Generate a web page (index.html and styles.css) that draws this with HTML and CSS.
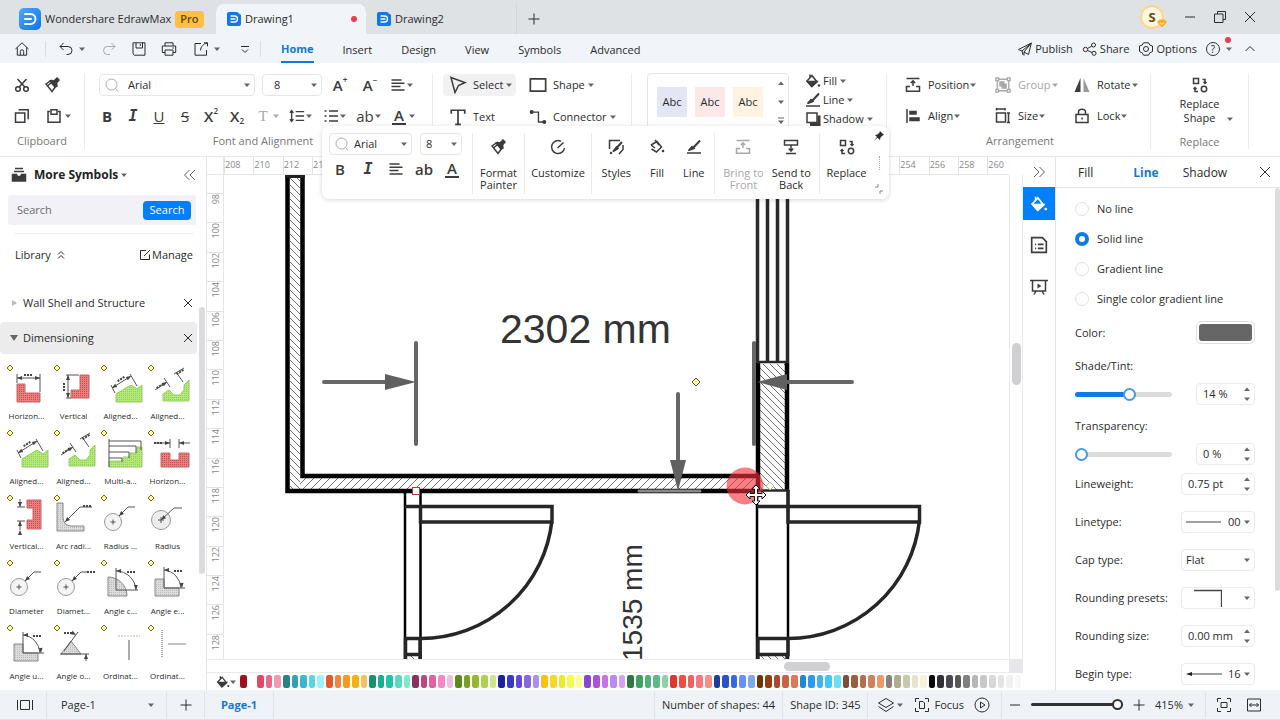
FILE: index.html
```html
<!DOCTYPE html>
<html lang="en">
<head>
<meta charset="utf-8">
<title>Wondershare EdrawMax</title>
<link rel="stylesheet" href="styles.css">
</head>
<body>
<svg class="sprite" aria-hidden="true">
  <defs>
    <linearGradient id="brand" x1="0" y1="0" x2="1" y2="1"><stop offset="0" stop-color="#4aa8fb"/><stop offset="1" stop-color="#1273ea"/></linearGradient>
    <pattern id="hatchDown" width="7" height="7" patternUnits="userSpaceOnUse"><path d="M-1 -1L8 8M-1 6L1 8M6 -1L8 1" stroke="#707070" stroke-width="1"/></pattern>
    <pattern id="hatchUp" width="8" height="8" patternUnits="userSpaceOnUse"><path d="M-1 9L9 -1M-1 1L1 -1M7 9L9 7" stroke="#707070" stroke-width="1"/></pattern>
    <pattern id="redFill" width="2" height="2" patternUnits="userSpaceOnUse"><rect width="2" height="2" fill="#e88080"/><rect width="1" height="1" fill="#c84c4c"/></pattern>
    <pattern id="greenFill" width="2" height="2" patternUnits="userSpaceOnUse"><rect width="2" height="2" fill="#b2ea78"/><rect width="1" height="1" fill="#98cc60"/></pattern>
    <pattern id="grayFill" width="2" height="2" patternUnits="userSpaceOnUse"><rect width="2" height="2" fill="#dcdcdc"/><rect width="1" height="1" fill="#bcbcbc"/></pattern>
  </defs>
  <symbol id="logo" viewBox="0 0 22 22"><rect width="22" height="22" rx="5" fill="url(#brand)"/><path d="M6 6h5.500a5 5 0 0 1 0 10H6M6 11h6" fill="none" stroke="#fff" stroke-width="2" stroke-linecap="round"/></symbol>
  <symbol id="doc" viewBox="0 0 14 14"><path d="M2 0h8l4 3v9a2 2 0 0 1-2 2H2a2 2 0 0 1-2-2V2a2 2 0 0 1 2-2z" fill="#0f7ae5"/><path d="M4 4h3.500a3 3 0 0 1 0 6H4M4 7h4" fill="none" stroke="#fff" stroke-width="1.300" stroke-linecap="round"/></symbol>
  <symbol id="caret" viewBox="0 0 8 8"><path d="M1 2.500h6L4 6z" fill="currentColor"/></symbol>
  <symbol id="up" viewBox="0 0 8 8"><path d="M1 6h6L4 2.500z" fill="currentColor"/></symbol>
  <symbol id="home" viewBox="0 0 16 16"><path d="M1.500 8L8 1.800 14.500 8M3.300 6.500v7.700h9.400V6.500M6.300 14v-3.500a1.700 1.700 0 0 1 3.400 0V14"/></symbol>
  <symbol id="undo" viewBox="0 0 16 16"><path d="M5.500 2L2 5.500 5.500 9M2 5.500h8a4 4 0 0 1 0 8H8.500"/></symbol>
  <symbol id="redo" viewBox="0 0 16 16"><path d="M10.500 2L14 5.500 10.500 9M14 5.500H6.500a4 4 0 0 0 0 8H9"/></symbol>
  <symbol id="save" viewBox="0 0 16 16"><path d="M2 1.800h12v12.400H3.500L2 12.800zM5 2v5h6.500V2M9.300 3v2"/></symbol>
  <symbol id="print" viewBox="0 0 16 16"><path d="M4 5V1.800h8V5M4 11.500H1.300V5h13.400v6.500H12M4 9h8v5.200H4zM11.500 7h1.500"/></symbol>
  <symbol id="export" viewBox="0 0 16 16"><path d="M8 2.500H2v11.700h11.500V9M11 1.800h3.500v3.500M14.300 2C10 3 8 5.500 7.500 9.500"/></symbol>
  <symbol id="qat" viewBox="0 0 16 16"><path d="M4 5.500h8M5 8.500l3 3 3-3"/></symbol>
  <symbol id="plus" viewBox="0 0 16 16"><path d="M8 2.500v11M2.500 8h11"/></symbol>
  <symbol id="minus" viewBox="0 0 16 16"><path d="M3 8h10"/></symbol>
  <symbol id="restore" viewBox="0 0 16 16"><path d="M2.500 5h8.500v8.500H2.500zM5.500 5V2.500h8v8H11"/></symbol>
  <symbol id="close" viewBox="0 0 16 16"><path d="M3 3l10 10M13 3L3 13"/></symbol>
  <symbol id="publish" viewBox="0 0 16 16"><path d="M14.300 2L1.500 8.500 5 10l9.300-8L11.500 13.500 7 11v3.500M7 11l7.300-9M5 10l1 4"/></symbol>
  <symbol id="share" viewBox="0 0 16 16"><circle cx="3.500" cy="8.500" r="2.200"/><circle cx="11.500" cy="4" r="2"/><circle cx="12" cy="12.300" r="2"/><path d="M5.500 7.500l4.300-2.500M5.500 9.500l4.700 2"/></symbol>
  <symbol id="options" viewBox="0 0 16 16"><path d="M5.500 1.800h5l1.300 2.200 2.700 1v5.500l-2.700 1.300-1.300 2.400h-5l-1.300-2.400-2.700-1.300V5L4.200 4z"/><circle cx="8" cy="8" r="2.500"/></symbol>
  <symbol id="chevUp" viewBox="0 0 16 16"><path d="M3.500 10L8 5.500l4.500 4.500"/></symbol>
  <symbol id="cut" viewBox="0 0 16 16"><circle cx="4" cy="12" r="2.300"/><circle cx="12" cy="12" r="2.300"/><path d="M5.200 10L12.500 2M10.800 10L3.500 2"/></symbol>
  <symbol id="brush" viewBox="0 0 16 16"><path d="M2 7l5-3.500 5 5.500-4 5.500zM7 6l-3 2.500" /><path d="M7.500 3.500L10 4l3-3 2 2-2.500 3 .5 3-2 1-5-6z" fill="currentColor"/></symbol>
  <symbol id="copy" viewBox="0 0 16 16"><path d="M1.500 5h9.300v9.300H1.500zM4.500 1.800h9.700v9.400"/></symbol>
  <symbol id="paste" viewBox="0 0 16 16"><path d="M4 3.500H2v10.700h12V3.500h-2M5 1.800h6v4.400H5z"/></symbol>
  <symbol id="find" viewBox="0 0 16 16"><circle cx="7.500" cy="7.500" r="5.500"/><path d="M11.500 11.500l2.500 3"/></symbol>
  <symbol id="align" viewBox="0 0 16 16"><path d="M1.500 3h10M1.500 6.300h13M1.500 9.600h9M1.500 13h13"/></symbol>
  <symbol id="spacing" viewBox="0 0 18 16"><path d="M3 2v12M1 4.500l2-2.500 2 2.500M1 11.500L3 14l2-2.500M7.500 3H17M7.500 8H17M7.500 13H17"/></symbol>
  <symbol id="list" viewBox="0 0 16 16"><path d="M1.500 3h2M1.500 8h2M1.500 13h2M6 3h9M6 8h9M6 13h9"/></symbol>
  <symbol id="pointer" viewBox="0 0 18 18"><path d="M2 1.500L16 6.500l-6.500 3-3.500 7z"/></symbol>
  <symbol id="textTool" viewBox="0 0 16 16"><path d="M2 5V2h12v3M8 2v12.500M5.500 14.500h5"/></symbol>
  <symbol id="shape" viewBox="0 0 16 16"><path d="M1.200 2.500h13.600v11H1.200z"/></symbol>
  <symbol id="connector" viewBox="0 0 20 18"><path d="M4 3.500h6.500v11H16"/><circle cx="3" cy="3.500" r="1.500" fill="currentColor"/><circle cx="17" cy="14.500" r="1.500" fill="currentColor"/></symbol>
  <symbol id="bucket" viewBox="0 0 16 16"><path d="M7 2.500L2 8l4.500 5.500L12 9zM5 5V1.500"/><path d="M2.500 8.500h9.500L7 13.500z" fill="currentColor"/><circle cx="14" cy="12.500" r="1.200" fill="currentColor" stroke="none"/></symbol>
  <symbol id="bucketOpen" viewBox="0 0 16 16"><path d="M2 6l6-3.500 4.500 5.500-5 5L2.500 10M2 6l4 3M6 1l4 5"/><circle cx="14" cy="12" r="1.300" fill="currentColor" stroke="none"/></symbol>
  <symbol id="pen" viewBox="0 0 16 16"><path d="M14 1.500L7 9" stroke-width="2"/><path d="M2.500 11.500L6 7.500l2 2z" fill="currentColor"/><path d="M1 14h14"/></symbol>
  <symbol id="shadow" viewBox="0 0 16 16"><path d="M5 13.500h9V4.500" stroke-width="3"/><path d="M2 2h10v9.500H2z"/></symbol>
  <symbol id="position" viewBox="0 0 16 16"><path d="M1.500 1.500h13M8 9V4M5.800 6L8 3.800 10.200 6M5 9.500H1.500v4.800h13V9.500H11"/></symbol>
  <symbol id="back" viewBox="0 0 16 16"><path d="M1.500 1.500h13v4.500h-13zM8 6v6M5.800 9.500L8 12l2.200-2.500M3 14.500h10"/></symbol>
  <symbol id="alignObj" viewBox="0 0 16 16"><path d="M2 1v14"/><path d="M5 3.500h6v2.500H5zM5 10h9v2.500H5z" fill="currentColor"/></symbol>
  <symbol id="group" viewBox="0 0 18 18"><path d="M2.500 2.500h13v13h-13z"/><path d="M1 1h3v3H1zM14 1h3v3h-3zM1 14h3v3H1zM14 14h3v3h-3z" fill="#fff"/><path d="M5.500 5.500h4.500v4.500H5.500zM8 8h4.500v4.500H8z" fill="currentColor"/></symbol>
  <symbol id="size" viewBox="0 0 16 16"><path d="M1.500 1h8.500M1.500 0v2.500M10 0v2.500M1.500 5h9v9h-9zM13.500 5.500v8.500M12 5h3M12 14.500h3"/></symbol>
  <symbol id="rotate" viewBox="0 0 16 16"><path d="M6.500 1v14H.5z" fill="currentColor" stroke="none"/><path d="M9.500 1v14h6z" fill="#999" stroke="none"/></symbol>
  <symbol id="lock" viewBox="0 0 16 16"><path d="M2 6.500h12v8H2zM4.500 6.500V4a3.500 2.800 0 0 1 7 0v2.500M8 9.500v2"/></symbol>
  <symbol id="replace" viewBox="0 0 16 16"><path d="M1.500 1.500h5v5h-5z"/><circle cx="12" cy="12" r="2.700"/><path d="M10.500 2.500H13V6M11.500 5l1.500 1.500L14.500 5M6 14.500H3V11M1.500 12L3 10.500 4.500 12"/></symbol>
  <symbol id="customize" viewBox="0 0 16 16"><path d="M11 2.300A6.500 6.500 0 1 0 14.500 9M7.500 9L13.500 3.500"/></symbol>
  <symbol id="styles" viewBox="0 0 16 16"><path d="M1.500 10V1.500H12M15 6v4.500L11 15"/><path d="M14 3L9 8.500" stroke-width="2"/><path d="M5 12.500l3.500-4.500 1.500 1.500z" fill="currentColor"/><circle cx="3" cy="14" r=".5"/></symbol>
  <symbol id="pin" viewBox="0 0 12 12"><path d="M7 1l4 4-1.500.5-2 2L7 10 4.500 7.700 1 11l3-4L2 5l2.500-.5 2-2z" fill="currentColor"/></symbol>
  <symbol id="box" viewBox="0 0 16 16"><path d="M4 1.500h8M3 4.500h10" stroke-width="1.500"/><path d="M1.500 7.500h4l1 2h3l1-2h4V14h-13z" fill="currentColor"/></symbol>
  <symbol id="dblLeft" viewBox="0 0 16 16"><path d="M7.500 3L2.500 8l5 5M13 3L8 8l5 5"/></symbol>
  <symbol id="dblRight" viewBox="0 0 16 16"><path d="M3 3l5 5-5 5M8.500 3l5 5-5 5"/></symbol>
  <symbol id="dblUp" viewBox="0 0 10 12"><path d="M2 5.500l3-3 3 3M2 9.500l3-3 3 3"/></symbol>
  <symbol id="edit" viewBox="0 0 12 12"><path d="M7 1.500H1.500v9h9V5.500M5 7l6-6"/></symbol>
  <symbol id="page" viewBox="0 0 16 16"><path d="M1.500 1.500h9.500l3.500 3.500v9.500h-13zM4.500 7.500h1M4.500 11h1M7 7.500h5M7 11h5"/></symbol>
  <symbol id="present" viewBox="0 0 18 16"><path d="M0 1.500h18M2.500 1.500v10.500h13V1.500M6 12l-2 3.500M12 12l2 3.500"/><path d="M7.500 4.500v5L11.500 7z" fill="currentColor" stroke="none"/></symbol>
  <symbol id="panel" viewBox="0 0 18 14"><path d="M1.500 2v10M16.500 2v10M4.500 2.500h9v9h-9z"/></symbol>
  <symbol id="layers" viewBox="0 0 18 16"><path d="M9 1.500l7.500 4.500L9 10.500 1.500 6zM1.500 9.500L9 14.500l7.500-5"/></symbol>
  <symbol id="focus" viewBox="0 0 16 16"><path d="M1.500 5V1.500H5M11 1.500h3.500V5M14.500 11v3.500H11M5 14.500H1.500V11M5.500 4.500h3.500L10.500 6v5.500h-5z"/></symbol>
  <symbol id="play" viewBox="0 0 16 16"><circle cx="8" cy="8" r="7"/><path d="M6.500 5v6l4.500-3z"/></symbol>
  <symbol id="fit" viewBox="0 0 16 16"><path d="M1.500 5V1.500H5M11 1.500h3.500V5M14.500 11v3.500H11M5 14.500H1.500V11M5 5.500h6v5H5z"/></symbol>
  <symbol id="fitWidth" viewBox="0 0 16 16"><path d="M1.500 2h13M1.500 2v12h13V2M3.500 8h9M5.500 6l-2 2 2 2M10.500 6l2 2-2 2"/></symbol>
  <symbol id="handle" viewBox="0 0 8 8"><path d="M4 1l3 3-3 3-3-3z" fill="#ffffa0" stroke="#6b6b20" stroke-width="1"/></symbol>
</svg>

<header class="titlebar">
  <div class="brand"><svg class="i22"><use href="#logo"/></svg><span>Wondershare EdrawMax</span><b class="pro">Pro</b></div>
  <button class="tab active"><svg class="i14"><use href="#doc"/></svg><span>Drawing1</span><i class="dot"></i></button>
  <button class="tab"><svg class="i14"><use href="#doc"/></svg><span>Drawing2</span></button>
  <button class="newtab" aria-label="New tab"><svg class="ic"><use href="#plus"/></svg></button>
  <div class="window">
    <span class="avatar">S<svg viewBox="0 0 10 9"><path d="M2.500.5h5L10 3 5 8.500 0 3z" fill="#f9ad20"/><path d="M3 3.500l2 2 2-2" stroke="#fff" fill="none"/></svg></span>
    <button aria-label="Minimize"><svg class="ic"><use href="#minus"/></svg></button>
    <button aria-label="Restore"><svg class="ic"><use href="#restore"/></svg></button>
    <button aria-label="Close"><svg class="ic"><use href="#close"/></svg></button>
  </div>
</header>

<nav class="menubar">
  <div class="quick">
    <button class="homebtn" aria-label="Start"><svg class="ic"><use href="#home"/></svg></button>
    <button class="wide" aria-label="Undo"><svg class="ic"><use href="#undo"/></svg><svg class="ct"><use href="#caret"/></svg></button>
    <button class="off" aria-label="Redo"><svg class="ic"><use href="#redo"/></svg></button>
    <button aria-label="Save"><svg class="ic"><use href="#save"/></svg></button>
    <button aria-label="Print"><svg class="ic"><use href="#print"/></svg></button>
    <button class="wide" aria-label="Export"><svg class="ic"><use href="#export"/></svg><svg class="ct"><use href="#caret"/></svg></button>
    <button aria-label="Customize toolbar"><svg class="ic"><use href="#qat"/></svg></button>
  </div>
  <div class="menus">
    <a class="current" href="#home">Home</a><a href="#insert">Insert</a><a href="#design">Design</a><a href="#view">View</a><a href="#symbols">Symbols</a><a href="#advanced">Advanced</a>
  </div>
  <div class="actions">
    <button><svg class="ic"><use href="#publish"/></svg>Publish</button>
    <button><svg class="ic"><use href="#share"/></svg>Share</button>
    <button><svg class="ic"><use href="#options"/></svg>Options</button>
    <button class="help" aria-label="Help"><span class="q">?</span><svg class="ct"><use href="#caret"/></svg><i class="dot"></i></button>
    <button aria-label="Collapse ribbon"><svg class="ic"><use href="#chevUp"/></svg></button>
  </div>
</nav>

<section class="ribbon">
  <div class="rgroup clip">
    <div class="row"><button aria-label="Cut"><svg class="ic b"><use href="#cut"/></svg></button><button aria-label="Format painter"><svg class="ic b"><use href="#brush"/></svg></button></div>
    <div class="row"><button aria-label="Copy"><svg class="ic b"><use href="#copy"/></svg></button><button class="paste" aria-label="Paste"><svg class="ic b"><use href="#paste"/></svg><svg class="ct"><use href="#caret"/></svg></button></div>
    <p>Clipboard</p>
  </div>
  <div class="rgroup font">
    <div class="row">
      <label class="combo family"><svg class="ic"><use href="#find"/></svg><select aria-label="Font"><option>Arial</option></select><svg class="ct"><use href="#caret"/></svg></label>
      <label class="combo fsize"><select aria-label="Font size"><option>8</option></select><svg class="ct"><use href="#caret"/></svg></label>
      <button class="glyph grow" aria-label="Grow font">A<sup>+</sup></button>
      <button class="glyph grow" aria-label="Shrink font">A<sup>−</sup></button>
      <button class="drop" aria-label="Text alignment"><svg class="ic b"><use href="#align"/></svg><svg class="ct"><use href="#caret"/></svg></button>
    </div>
    <div class="row chars">
      <button class="glyph bold">B</button><button class="glyph ital">I</button><button class="glyph under">U</button><button class="glyph strike">S</button><button class="glyph">X<sup>2</sup></button><button class="glyph">X<sub>2</sub></button>
      <button class="drop off"><span class="glyph tee">T</span><svg class="ct"><use href="#caret"/></svg></button>
      <button class="drop" aria-label="Line spacing"><svg class="ic b"><use href="#spacing"/></svg><svg class="ct"><use href="#caret"/></svg></button>
      <button class="drop" aria-label="Bullets"><svg class="ic b"><use href="#list"/></svg><svg class="ct"><use href="#caret"/></svg></button>
      <button class="drop"><span class="glyph">ab</span><svg class="ct"><use href="#caret"/></svg></button>
      <button class="drop"><span class="glyph fc">A</span><svg class="ct"><use href="#caret"/></svg></button>
    </div>
    <p>Font and Alignment</p>
  </div>
  <div class="rgroup tools">
    <div class="row"><button class="cmd c1 on"><svg class="ic b i18"><use href="#pointer"/></svg>Select<svg class="ct"><use href="#caret"/></svg></button><button class="cmd"><svg class="ic b i18"><use href="#shape"/></svg>Shape<svg class="ct"><use href="#caret"/></svg></button></div>
    <div class="row"><button class="cmd c1"><svg class="ic b i18"><use href="#textTool"/></svg>Text</button><button class="cmd"><svg class="ic b i18"><use href="#connector"/></svg>Connector<svg class="ct"><use href="#caret"/></svg></button></div>
  </div>
  <div class="rgroup looks">
    <div class="gallery">
      <button class="abc lilac">Abc</button><button class="abc rose">Abc</button><button class="abc cream">Abc</button>
      <div class="arrows"><svg class="ct"><use href="#up"/></svg><svg class="ct"><use href="#caret"/></svg><svg class="ct" viewBox="0 0 8 8"><path d="M1 1h6" stroke="currentColor"/><path d="M1 3.500h6L4 7z" fill="currentColor"/></svg></div>
    </div>
    <div class="stack">
      <button><svg class="ic b"><use href="#bucket"/></svg>Fill<svg class="ct"><use href="#caret"/></svg></button>
      <button><svg class="ic b"><use href="#pen"/></svg>Line<svg class="ct"><use href="#caret"/></svg></button>
      <button><svg class="ic b"><use href="#shadow"/></svg>Shadow<svg class="ct"><use href="#caret"/></svg></button>
    </div>
  </div>
  <div class="rgroup arrange">
    <div class="row"><button class="cmd"><svg class="ic b"><use href="#position"/></svg>Position<svg class="ct"><use href="#caret"/></svg></button><button class="cmd off"><svg class="ic b"><use href="#group"/></svg>Group<svg class="ct"><use href="#caret"/></svg></button><button class="cmd"><svg class="ic b"><use href="#rotate"/></svg>Rotate<svg class="ct"><use href="#caret"/></svg></button></div>
    <div class="row"><button class="cmd"><svg class="ic b"><use href="#alignObj"/></svg>Align<svg class="ct"><use href="#caret"/></svg></button><button class="cmd"><svg class="ic b"><use href="#size"/></svg>Size<svg class="ct"><use href="#caret"/></svg></button><button class="cmd"><svg class="ic b"><use href="#lock"/></svg>Lock<svg class="ct"><use href="#caret"/></svg></button></div>
    <p>Arrangement</p>
  </div>
  <div class="rgroup swap">
    <button><svg class="ic b"><use href="#replace"/></svg><span>Replace<br>Shape</span><svg class="ct"><use href="#caret"/></svg></button>
    <p>Replace</p>
  </div>

  <div class="floatbar">
    <div class="ftext">
      <div class="frow">
        <label class="combo ffamily"><svg class="ic"><use href="#find"/></svg><select aria-label="Font"><option>Arial</option></select><svg class="ct"><use href="#caret"/></svg></label>
        <label class="combo fsmall"><select aria-label="Font size"><option>8</option></select><svg class="ct"><use href="#caret"/></svg></label>
      </div>
      <div class="frow fchars"><button class="glyph bold">B</button><button class="glyph ital">I</button><button aria-label="Align"><svg class="ic b"><use href="#align"/></svg></button><button class="glyph">ab</button><button class="glyph"><span class="fc">A</span></button></div>
    </div>
    <div class="fg w52"><button><svg class="ic b"><use href="#brush"/></svg>Format<br>Painter</button></div>
    <div class="fg w67"><button><svg class="ic b"><use href="#customize"/></svg>Customize</button></div>
    <div class="fg w123"><button><svg class="ic b"><use href="#styles"/></svg>Styles</button><button><svg class="ic b"><use href="#bucketOpen"/></svg>Fill</button><button><svg class="ic b"><use href="#pen"/></svg>Line</button></div>
    <div class="fg w105"><button class="off"><svg class="ic b"><use href="#position"/></svg>Bring to<br>Front</button><button><svg class="ic b"><use href="#back"/></svg>Send to<br>Back</button></div>
    <div class="fg w54"><button><svg class="ic b"><use href="#replace"/></svg>Replace</button></div>
    <div class="fend"><svg class="i12"><use href="#pin"/></svg><span class="dots"></span><svg class="i12" viewBox="0 0 12 12"><path d="M2 4h3V1M7 11V8h3" fill="none" stroke="#888"/></svg></div>
  </div>
</section>

<main>
  <aside class="library">
    <div class="lhead"><svg class="ic b"><use href="#box"/></svg><h2>More Symbols</h2><svg class="ct"><use href="#caret"/></svg><button aria-label="Collapse"><svg class="ic"><use href="#dblLeft"/></svg></button></div>
    <form class="search"><input type="text" placeholder="Search" aria-label="Search symbols"><button type="button">Search</button></form>
    <div class="lrow"><button>Library<svg class="i12 ln"><use href="#dblUp"/></svg></button><button><svg class="i12 ln"><use href="#edit"/></svg>Manage</button></div>
    <div class="cat"><svg viewBox="0 0 8 8"><path d="M2 1v6l5-3z" fill="#bbb"/></svg><span>Wall Shell and Structure</span><button aria-label="Remove"><svg class="i12 ln" viewBox="0 0 12 12"><path d="M2 2l8 8M10 2l-8 8"/></svg></button></div>
    <div class="cat open"><svg viewBox="0 0 8 8"><path d="M0 1h8L4 7z" fill="#666"/></svg><span>Dimensioning</span><button aria-label="Remove"><svg class="i12 ln" viewBox="0 0 12 12"><path d="M2 2l8 8M10 2l-8 8"/></svg></button></div>
    <div class="symbols" id="symbols"></div>
    <i class="lthumb"></i>
  </aside>

  <section class="canvas">
    <div class="corner"></div>
    <div class="hruler"><div id="hruler"></div></div>
    <div class="vruler" id="vruler"></div>
    <div class="sheet">
      <svg width="785" height="484" viewBox="224 175 785 484" role="img" aria-label="Floor plan">
        <g class="walls">
          <path d="M290 175H300V478H757V489H290z" fill="#fff"/>
          <path d="M290 178H300V489L290 489z" fill="url(#hatchDown)"/>
          <path d="M300 478H757V489H300z" fill="url(#hatchUp)"/>
          <path d="M760 364H785V490H760z" fill="url(#hatchDown)"/>
          <path d="M760 656H785V659H760zM407 656H418V659H407z" fill="url(#hatchDown)"/>
          <path d="M287.500 176V491H757M302.500 176V476H757" fill="none" stroke="#000" stroke-width="4.500"/>
          <path d="M285 176.500H305" stroke="#222" stroke-width="3"/>
          <path d="M758 362V491M787 362V491" stroke="#000" stroke-width="4.500"/>
          <path d="M757.500 175V362M767.500 175V362M777.500 175V362M787.500 175V362" stroke="#2a2a2a" stroke-width="3.500"/>
          <path d="M756 362H789M757 490.500H789" stroke="#2a2a2a" stroke-width="2.500"/>
        </g>
        <g fill="none" stroke="#262626" stroke-width="3.500">
          <path d="M757 490V659M788 490V659M405 491V659M420.500 491V659" stroke="#000" stroke-width="2.500"/>
          <path d="M757 506.500H919.500V522H788V490M788 638.500A132 132 0 0 0 919.500 520M758 638.500H788V654.500H758zM758 654V659M787 654V659"/>
          <path d="M405 506.500H552V522H420.500V506M420.500 638.500A132 132 0 0 0 552 520M405.500 638.500H420V654.500H405.500zM405.500 654V659M420 654V659"/>
        </g>
        <g fill="none" stroke="#666" stroke-width="4" stroke-linecap="round">
          <path d="M324 382H388M416 343V444M754 343V444M788 382H852M678 394V462"/>
          <path d="M639 491H700" stroke="#888" stroke-width="3"/>
        </g>
        <path d="M385 374L416 382L385 390zM787 374L757 382L787 390zM670 460H686L678 491z" fill="#606060"/>
        <text x="500" y="343" font-size="41">2302 mm</text>
        <text transform="translate(642 661) rotate(-90)" font-size="28">1535 mm</text>
        <rect x="412.500" y="487.500" width="7" height="7" fill="#fff" stroke="#c33"/>
        <path d="M696 378l4 4-4 4-4-4z" fill="#ffffa0" stroke="#55552a"/>
        <path d="M770 482l4 4-4 4-4-4z" fill="#fffff0" stroke="#bbb89a"/>
        <circle cx="745" cy="486" r="18.500" fill="#f5303c" fill-opacity=".62"/>
        <path d="M756 485l4 4h-2.500v4.500h4.500V491l4 4-4 4v-2.500h-4.500v4.500h2.500l-4 4-4-4h2.500v-4.500H750v2.500l-4-4 4-4v2.500h4.500V489H752z" fill="#fff" stroke="#111" stroke-width="1"/>
      </svg>
    </div>
    <div class="vscroll"><i></i></div>
    <div class="hscroll"><i></i></div>
    <div class="endcap"></div>
    <div class="palette"><svg class="ic b"><use href="#bucket"/></svg><svg class="ct"><use href="#caret"/></svg><div id="swatches"></div></div>
  </section>

  <nav class="sidetabs">
    <button aria-label="Collapse"><svg class="ic"><use href="#dblRight"/></svg></button>
    <button class="on" aria-label="Format"><svg class="ic b i18"><use href="#bucket"/></svg></button>
    <button aria-label="Page"><svg class="ic b i18"><use href="#page"/></svg></button>
    <button aria-label="Presentation"><svg class="ic b i18"><use href="#present"/></svg></button>
  </nav>

  <aside class="format">
    <div class="ftabs"><button>Fill</button><button class="current">Line</button><button>Shadow</button><button class="x" aria-label="Close"><svg class="ic"><use href="#close"/></svg></button></div>
    <form class="fbody">
      <label class="radio"><input type="radio" name="line">No line</label>
      <label class="radio"><input type="radio" name="line" checked>Solid line</label>
      <label class="radio"><input type="radio" name="line">Gradient line</label>
      <label class="radio"><input type="radio" name="line">Single color gradient line</label>
      <div class="field color"><span>Color:</span><button type="button" class="chip" aria-label="Line color"><i></i></button></div>
      <div class="slide"><label for="tint">Shade/Tint:</label><div><input id="tint" class="tint" type="range" min="-100" max="100" value="14"><span class="spin small"><input type="text" value="14 %" aria-label="Shade or tint value"><svg class="ct"><use href="#up"/></svg><svg class="ct"><use href="#caret"/></svg></span></div></div>
      <div class="slide"><label for="alpha">Transparency:</label><div><input id="alpha" type="range" min="0" max="100" value="0"><span class="spin small"><input type="text" value="0 %" aria-label="Transparency value"><svg class="ct"><use href="#up"/></svg><svg class="ct"><use href="#caret"/></svg></span></div></div>
      <div class="field"><label for="weight">Lineweight:</label><span class="spin"><input id="weight" type="text" value="0.75 pt"><svg class="ct"><use href="#up"/></svg><svg class="ct"><use href="#caret"/></svg></span></div>
      <div class="field"><label for="ltype">Linetype:</label><span class="pick"><svg class="demo" viewBox="0 0 36 20"><path d="M0 10h35" stroke="#444"/></svg><select id="ltype"><option>00</option></select><svg class="ct"><use href="#caret"/></svg></span></div>
      <div class="field"><label for="cap">Cap type:</label><span class="pick"><select id="cap"><option>Flat</option></select><svg class="ct"><use href="#caret"/></svg></span></div>
      <div class="field"><label for="preset">Rounding presets:</label><span class="pick"><svg class="demo" viewBox="0 0 36 20"><path d="M8 2.500h28M35.500 2v17" stroke="#444" fill="none" stroke-width="1.300"/></svg><select id="preset"><option></option></select><svg class="ct"><use href="#caret"/></svg></span></div>
      <div class="field"><label for="rsize">Rounding size:</label><span class="spin"><input id="rsize" type="text" value="0.00 mm"><svg class="ct"><use href="#up"/></svg><svg class="ct"><use href="#caret"/></svg></span></div>
      <div class="field"><label for="begin">Begin type:</label><span class="pick"><svg class="demo" viewBox="0 0 36 20"><path d="M2 10h34" stroke="#444"/><path d="M0 10l6-2v4z" fill="#222"/></svg><select id="begin"><option>16</option></select><svg class="ct"><use href="#caret"/></svg></span></div>
    </form>
    <i class="fthumb"></i>
  </aside>
</main>

<footer class="status">
  <button class="cell s1" aria-label="Pages"><svg class="ic i18"><use href="#panel"/></svg></button>
  <label class="cell s2"><select aria-label="Page"><option>Page-1</option></select><svg class="ct"><use href="#caret"/></svg></label>
  <button class="cell s3" aria-label="Add page"><svg class="ic"><use href="#plus"/></svg></button>
  <button class="cell s4">Page-1</button>
  <span class="cell s5"></span>
  <span class="cell">Number of shapes: 44</span>
  <span class="cell">Shape ID: 345</span>
  <div class="cell s6"><button aria-label="Layers"><svg class="ic i18"><use href="#layers"/></svg><svg class="ct"><use href="#caret"/></svg></button><button><svg class="ic"><use href="#focus"/></svg>Focus</button><button aria-label="Play"><svg class="ic"><use href="#play"/></svg></button></div>
  <div class="cell s7"><button aria-label="Zoom out"><svg class="ic"><use href="#minus"/></svg></button><input type="range" min="0" max="100" value="100" aria-label="Zoom"><button aria-label="Zoom in"><svg class="ic"><use href="#plus"/></svg></button><button class="pct">415%<svg class="ct"><use href="#caret"/></svg></button></div>
  <div class="s8"><button aria-label="Fit page"><svg class="ic"><use href="#fit"/></svg></button><button aria-label="Fit width"><svg class="ic"><use href="#fitWidth"/></svg></button></div>
</footer>
<script src="script.js"></script>
</body>
</html>
```
FILE: styles.css
```css
* { box-sizing: border-box; }
html, body { height: 100%; }
body { margin: 0; display: grid; grid-template-rows: 34px 29px 94px minmax(0, 1fr) 30px; font: 11px/16px "Open Sans", "Noto Sans", sans-serif; color: #2b2b2b; background: #fff; overflow: hidden; }
button, select, input { font: inherit; color: inherit; background: none; border: 0; padding: 0; margin: 0; }
button { display: inline-flex; align-items: center; justify-content: center; white-space: nowrap; flex: none; }
select { appearance: none; outline: 0; }
p, h2 { margin: 0; }
a { color: inherit; text-decoration: none; }
svg { flex: none; display: block; }
.sprite { position: absolute; width: 0; height: 0; }
.ic, .ln { fill: none; stroke: currentColor; stroke-width: 1; }
.ic { width: 16px; height: 16px; }
.ic.b { stroke-width: 1.5; color: #3c3c3c; }
.i12 { width: 12px; height: 12px; }
.i14 { width: 14px; height: 14px; }
.i18.ic { width: 18px; height: 18px; }
.i22 { width: 22px; height: 22px; }
.ct { width: 8px; height: 8px; color: #666; }
.off, .off .ic, .off .ct { color: #a8a8a8; }
.dot { width: 6px; height: 6px; border-radius: 50%; background: #e5404e; }

.titlebar { display: flex; align-items: flex-end; background: #dee2e5; }
.brand { width: 216px; height: 30px; padding-left: 19px; display: flex; align-items: center; gap: 4px; white-space: nowrap; }
.pro { margin-left: auto; margin-right: 15px; padding: 0 5px; height: 17px; border-radius: 4px; background: #fdc040; color: #6a4300; font-weight: 600; font-size: 11px; }
.tab { width: 150px; height: 30px; padding: 0 9px 0 11px; justify-content: flex-start; gap: 4px; }
.tab .dot { margin-left: auto; }
.tab.active { background: #f1f4f8; border-radius: 8px 8px 0 0; }
.newtab { width: 34px; height: 30px; border-left: 1px solid #d2d6d9; }
.window { margin-left: auto; display: flex; align-items: center; height: 34px; padding-right: 15px; }
.window button { width: 30px; }
.avatar { position: relative; width: 24px; height: 24px; margin-right: 11px; border-radius: 50%; border: 2px solid #fbd68c; background: #fff6df; color: #6b4a10; font: 700 13px/20px "Open Sans", sans-serif; text-align: center; }
.avatar svg { position: absolute; right: -5px; bottom: -1px; width: 10px; height: 9px; }

.menubar { display: flex; background: #f1f4f8; }
.quick { display: flex; align-items: center; width: 260px; }
.quick::after { content: ""; margin-left: auto; height: 16px; border-left: 1px solid #d9dde2; }
.quick button { width: 30px; }
.quick .homebtn { width: 46px; padding-right: 1px; border-right: 1px solid #d9dde2; height: 16px; }
.quick .wide { width: 46px; gap: 4px; }
.quick .homebtn + .wide { padding-left: 4px; width: 48px; }
.menus { display: flex; gap: 29px; padding-left: 21px; }
.menus a { line-height: 27px; padding-top: 2px; }
.menus .current { color: #1379d4; font-weight: 700; border-bottom: 2px solid #1379d4; line-height: 25px; }
.actions { margin-left: auto; display: flex; align-items: center; padding-right: 22px; gap: 9px; }
.actions button { gap: 2px; }
.help { position: relative; }
.q { width: 14px; height: 14px; border: 1px solid #333; border-radius: 50%; font-size: 10px; line-height: 12px; }
.help .dot { position: absolute; right: 2px; top: -5px; }
.help .ct { margin-left: 3px; }

.ribbon { position: relative; display: flex; border-bottom: 1px solid #e6e8ea; padding-top: 10px; }
.rgroup { display: flex; flex-direction: column; gap: 8px; height: 76px; border-right: 1px solid #ececec; }
.rgroup p { color: #777; text-align: center; margin-top: -3px; }
.row { display: flex; height: 24px; align-items: center; }
.clip { width: 85px; padding-left: 7px; }
.clip .row button { width: 30px; }
.clip .row .paste { width: 44px; gap: 2px; }
.clip p { margin-right: 7px; }
.font { width: 348px; padding-left: 9px; }
.font .row:first-child { padding-left: 5px; }
.combo { display: flex; align-items: center; height: 22px; border: 1px solid #e6e6e9; border-radius: 4px; padding: 0 4px; background: #fff; }
.combo .ic { color: #aaa; margin-right: 8px; }
.combo select { flex: 1; min-width: 0; }
.family { width: 156px; margin-right: 7px; }
.fsize { width: 60px; padding-left: 11px; margin-right: 3px; }
.glyph { font-size: 15px; font-weight: 600; color: #3c3c3c; line-height: 18px; }
.glyph sup, .glyph sub { font-size: 8px; line-height: 8px; }
.glyph sup { align-self: flex-start; }
.glyph sub { align-self: flex-end; }
.grow { width: 30px; }
.drop { width: 34px; }
.chars > .glyph { width: 26px; }
.drop .glyph { width: 18px; font-weight: 400; text-align: center; }
.bold { font-weight: 700; }
.ital { font-style: italic; font-family: "DejaVu Sans Mono", monospace; }
.under { text-decoration: underline; font-weight: 400; }
.strike { text-decoration: line-through; font-weight: 400; }
.off .glyph { color: #a8a8a8; }
.drop .tee { font-family: "Liberation Serif", serif; }
.drop .fc, .fc { font-weight: 600; width: 14px; line-height: 16px; border-bottom: 2px solid #3c3c3c; margin: 0 2px; }
.tools { width: 199px; padding-left: 10px; }
.cmd { gap: 3px; justify-content: flex-start; }
.tools .cmd { gap: 0; height: 22px; padding-left: 6px; }
.tools .cmd .ic { margin-right: 6px; }
.cmd .ct { margin-left: -1px; }
.tools .cmd .ct { margin-left: 2px; }
.c1 { width: 73px; margin-right: 7px; }
.on.c1 { background: #f1f1f2; border-radius: 4px; }
.looks { width: 255px; padding-left: 15px; flex-direction: row; gap: 16px; }
.gallery { width: 142px; height: 58px; border: 1px solid #e6e6ea; border-radius: 4px; display: flex; align-items: center; gap: 8px; padding-left: 9px; }
.abc { width: 30px; height: 30px; }
.lilac { background: #e4e6f4; }
.rose { background: #fce8e8; }
.cream { background: #fff3e2; }
.arrows { display: flex; flex-direction: column; justify-content: space-between; height: 46px; margin-left: 6px; }
.stack { display: flex; flex-direction: column; align-items: flex-start; gap: 3px; }
.stack button { height: 16px; gap: 2px; }
.arrange { width: 264px; padding-left: 18px; }
.arrange .cmd { width: 90px; gap: 7px; }
.arrange .cmd + .cmd { width: 79px; }
.arrange .ct { margin-left: -7px; }
.arrange p { width: 230px; }
.swap { width: 98px; align-items: stretch; justify-content: space-between; }
.swap button { flex-direction: column; position: relative; line-height: 14px; gap: 4px; padding-top: 4px; }
.swap button .ct { position: absolute; right: 14px; bottom: 2px; }
.swap p { margin: 0 0 -1px; }

.floatbar { position: absolute; z-index: 5; left: 322px; top: 63px; height: 73px; display: flex; background: #fff; border-radius: 7px; box-shadow: 0 1px 5px rgba(0, 0, 0, .16); padding: 7px 4px 5px 7px; }
.ftext { width: 143px; }
.frow { display: flex; gap: 8px; }
.ffamily { width: 83px; }
.ffamily .ic { margin-right: 4px; }
.fsmall { width: 42px; padding-left: 5px; }
.combo .ct { margin-right: -1px; }
.fchars { gap: 0; margin-left: -3px; height: 28px; align-items: center; }
.fchars button { width: 28px; }
.fchars .glyph { font-weight: 600; }
.fg { display: flex; justify-content: center; align-items: flex-start; border-left: 1px solid #ececec; }
.fg button { line-height: 12px; padding-top: 6px; display: block; text-align: center; }
.fg .ic { margin: 0 auto 12px; }
.w52 { width: 52px; }
.w67 { width: 67px; }
.w123 { width: 123px; gap: 18px; }
.w105 { width: 105px; gap: 8px; }
.w54 { width: 54px; }
.fend { width: 12px; display: flex; flex-direction: column; justify-content: space-between; align-items: center; margin: -3px 0 -1px; }
.dots { height: 14px; border-left: 1px dotted #aaa; }

main { display: grid; grid-template-columns: 207px minmax(0, 1fr) 33px 224px; min-height: 0; }
.library { position: relative; border-right: 1px solid #e6e6e8; overflow: hidden; }
.lhead { display: flex; align-items: center; height: 36px; padding: 0 8px 0 11px; }
.lhead h2 { font-size: 12px; font-weight: 700; margin: 0 2px 0 7px; color: #222; }
.lhead button { margin-left: auto; color: #666; }
.search { display: flex; align-items: center; height: 30px; margin: 2px 10px 8px 8px; padding: 0 5px 0 9px; background: #f1f1f6; border-radius: 3px; }
.search input { flex: 1; min-width: 0; outline: 0; }
.search input::placeholder { color: #6c6c74; }
.search button { width: 48px; height: 19px; background: #0080ff; color: #fff; border-radius: 4px; }
.lrow { display: flex; justify-content: space-between; height: 42px; margin: 0 13px 12px 15px; border-top: 1px solid #ececee; }
.lrow button { gap: 4px; }
.lrow button + button { gap: 1px; }
.cat { display: flex; align-items: center; height: 32px; padding: 0 3px 0 10px; margin: 0 9px 3px 0; }
.cat > svg { width: 8px; height: 8px; margin-right: 5px; }
.cat button { margin-left: auto; }
.open { background: #ececec; border-radius: 4px; margin-bottom: 9px; }
.lthumb { position: absolute; right: 1px; top: 150px; width: 6px; height: 267px; border-radius: 3px; background: #dcdcdf; }
.symbols { display: grid; grid-template-columns: repeat(4, 47px); gap: 5px 0; padding-left: 3px; }
.symbols figure { margin: 0; font-size: 9px; line-height: 14px; text-align: center; }
.symbols figcaption { font-size: 8px; white-space: nowrap; }
.symbols .art { width: 47px; height: 46px; fill: none; stroke: #555; stroke-width: 1; }

.canvas { display: grid; grid-template: 18px minmax(0, 1fr) 14px 17px / 17px minmax(0, 1fr) 14px; min-width: 0; }
.hruler { grid-column: 2 / 4; overflow: hidden; color: #888; font-size: 9px; line-height: 16px; border-bottom: 1px solid #e4e6e8; margin-right: 14px; }
.hruler > div { width: 101%; display: flex; height: 17px; }
.hruler span { flex: 1 0 0; min-width: 0; border-left: 1px solid #dfe2e6; }
.vruler { color: #888; font-size: 9px; border-right: 1px solid #e4e6e8; padding-top: 18px; overflow: hidden; min-height: 0; display: flex; flex-direction: column; }
.vruler span { flex: 0 0 6.31%; border-top: 1px solid #dfe2e6; display: flex; align-items: flex-start; justify-content: center; }
.vruler b { font-weight: 400; writing-mode: vertical-rl; transform: rotate(180deg); line-height: 15px; }
.corner { border-bottom: 1px solid #e4e6e8; border-right: 1px solid #e4e6e8; }
.sheet { overflow: hidden; min-width: 0; min-height: 0; }
.sheet text { font-family: "Liberation Sans", sans-serif; fill: #333; }
.vscroll { border: 1px solid #e8eaec; border-width: 0 1px; display: flex; justify-content: center; align-items: flex-start; padding-top: 168px; }
.vscroll i { width: 9px; height: 42px; background: #d0d0d2; border-radius: 5px; }
.hscroll { grid-column: 1 / 3; border: 1px solid #e8eaec; border-width: 1px 0; padding: 2px 0 0 577px; }
.hscroll i { display: block; width: 46px; height: 9px; background: #d0d0d2; border-radius: 5px; }
.endcap { background: #e6e6ec; }
.palette { grid-column: 1 / 4; display: flex; align-items: center; padding-left: 9px; }
.palette .ct { margin: 0 2px 0 -1px; }
.palette .ic { width: 14px; height: 14px; }
#swatches { flex: 1; display: flex; height: 13px; }
#swatches i { flex: 1; border-left: 1px solid #fff; border-right: 1px solid #fff; border-radius: 3px; }

.sidetabs { display: flex; flex-direction: column; align-items: stretch; border: 1px solid #e6e6e8; border-width: 0 1px 0 0; }
.sidetabs button { height: 42px; color: #555; }
.sidetabs button:first-child { height: 30px; }
.sidetabs .on { height: 33px; background: #0080ff; margin-bottom: 4px; }
.sidetabs .on .ic { color: #fff; }
.format { position: relative; overflow: hidden; }
.ftabs { display: flex; height: 31px; align-items: center; border-bottom: 1px solid #e4e4e8; padding: 2px 7px 0 22px; font-size: 12px; }
.ftabs button + button { margin-left: 40px; }
.ftabs .current { color: #1379d4; font-weight: 700; }
.ftabs .current + button { margin-left: 24px; }
.ftabs .x { margin: -2px 0 0 auto !important; }
.fbody { padding: 6px 25px 0 19px; }
.radio { display: flex; align-items: center; height: 30px; gap: 8px; }
.radio input { appearance: none; width: 14px; height: 14px; border: 1px solid #e2e2e5; border-radius: 50%; }
.radio input:checked { border: 4px solid #0f7ce6; }
.field { display: flex; align-items: center; justify-content: space-between; height: 38px; }
.color { height: 37px; }
.chip { width: 59px; height: 23px; padding: 2px; border: 1px solid #dedee2; border-radius: 5px; }
.chip i { width: 100%; height: 100%; background: #666; border-radius: 3px; }
.slide { padding-top: 4px; }
.slide + .slide { padding-top: 10px; }
.slide > label { display: block; height: 28px; line-height: 22px; }
.slide > div { display: flex; align-items: center; justify-content: space-between; height: 22px; }
.slide input[type=range] { width: 97px; }
input[type=range] { appearance: none; height: 14px; }
input[type=range]::-webkit-slider-runnable-track { height: 5px; border-radius: 3px; background: #dcdcdc; }
.tint::-webkit-slider-runnable-track { background: linear-gradient(90deg, #0f7ce6 56%, #dcdcdc 56%) !important; }
input[type=range]::-webkit-slider-thumb { appearance: none; width: 13px; height: 13px; margin-top: -4px; border-radius: 50%; border: 2px solid #4a97e2; background: #fff; }
.spin, .pick { display: grid; grid-template-columns: 1fr 8px; align-items: center; width: 74px; height: 22px; border: 1px solid #ebebee; border-radius: 4px; padding: 0 3px 0 6px; }
.spin input { grid-row: 1 / 3; width: 100%; min-width: 0; outline: 0; }
.spin.small { width: 59px; }
.pick { display: flex; padding-left: 4px; }
.pick select { flex: 1; min-width: 0; }
.demo { width: 36px; height: 20px; margin-right: 6px; fill: none; }
.fthumb { position: absolute; right: 0; top: 31px; width: 5px; height: 403px; border-radius: 3px; background: #dcdcdf; }

.status { display: flex; align-items: center; background: #eff3f7; border-bottom: 1px solid #dde1e6; }
.cell { height: 26px; display: flex; align-items: center; justify-content: center; border-right: 1px solid #dfe3e8; padding: 0 7px; }
.s1 { width: 47px; padding: 0 0 0 4px; }
.s2 { width: 120px; padding: 0 11px 0 14px; }
.s2 select { flex: 1; min-width: 0; }
.s3 { width: 38px; }
.s4 { width: 69px; color: #1379d4; font-weight: 700; }
.s5 { flex: 1; }
.s6 { padding: 0 11px 0 9px; gap: 10px; }
.s6 button { gap: 4px; }
.s6 button:first-child { gap: 1px; }
.s7 { padding: 0 10px 0 5px; gap: 8px; }
.s7 input { width: 92px; }
.s7 input::-webkit-slider-runnable-track { height: 3px; background: #333; }
.s7 input::-webkit-slider-thumb { width: 11px; height: 11px; border-color: #333; }
.pct { gap: 4px; }
.s8 { display: flex; gap: 14px; padding: 0 18px 0 10px; }
```
FILE: script.js
```js
const swatches = `9c1020 ffffff e0486a e8698a f09aae 2a7f8a 36a0b0 40b4cc 58d6e4 a0f0ff
e45a28 f28240 f59a20 f8b010 f5c060 159070 14b090 20c4a8 60d8c0 80e8d0
8c3060 b84880 dc64a0 f488c4 ecc0dc 5a8a18 7aa028 96b830 b0d050 cce48a
1a20a0 3838c8 6048e0 8468e0 a890f0 f0c410 f4d830 ece830 f4fa50 faff90
8848c8 b050d0 cc70e8 b888f4 d4a0f4 2c7840 40a060 50b078 60b888 90d0a8
e03830 f04c40 f06060 f47880 f49088 203c9c 2c50c8 3868e0 6890f8 80a8f0
6c3408 904010 a84830 cc6040 dc7858 2088cc 3098e8 48b0e8 40c8f0 68e0f8
785038 986040 b07050 cc8460 ec9868 888078 b0ac90 c8c8b0 e4e4cc f4f4d8
080808 303034 484850 585858 808080 b8b8b8 c8c8c8 d8d8dc e4e4e4 f0f0f0 f8f8f8`.split(/\s+/);
document.getElementById("swatches").innerHTML =
  swatches.map(c => `<i style="background-color:#${c}"></i>`).join("");

const range = (from, to) => Array.from({ length: (to - from) / 2 + 1 }, (_, i) => from + i * 2);
document.getElementById("hruler").innerHTML = range(208, 260).map(n => `<span>${n}</span>`).join("");
document.getElementById("vruler").innerHTML = range(98, 128).map(n => `<span><b>${n}</b></span>`).join("");

const red = 'fill="url(#redFill)" stroke="#c66"';
const green = 'fill="url(#greenFill)" stroke="#9c6"';
const gray = 'fill="url(#grayFill)" stroke="#888"';
const head = (x, y, a) => `<path d="M0 0l-5-2v4z" fill="#444" stroke="none" transform="translate(${x} ${y}) rotate(${a})"/>`;
const blur = (x, y, a) => `<path d="M-4 0h8" stroke="#444" stroke-width="2" stroke-dasharray="2 1" transform="translate(${x} ${y}) rotate(${a})"/>`;

const slope = `<path d="M19 39V31l15-9 6 4 5-4v17z" ${green}/><path d="M15 25L34 13M14 22l4 8M33 11l7 12"/>${blur(24, 16, -32)}${head(34, 13, -32)}${head(15, 25, 148)}`;
const notch = `<path d="M19 38V31l6-4 5 5h6l4-5V22l5-5v21z" ${green}/><path d="M11 27l12-8M20 15l6 9M30 11l10-6M32 9l7 10"/>${blur(16, 23, -32)}${blur(36, 9, -32)}${head(23, 19, -32)}`;
const circle = `<circle cx="16" cy="29" r="8.500" fill="#f4f4f4" stroke="#999"/><path d="M13.500 29h5M16 26.500v5"/><path d="M22 23l9-9h7"/>${head(22, 23, 135)}`;
const corner = `<path d="M11 38V21h9v9h15v8z" ${gray}/><path d="M20 30V9M20 30h21M20 12a19 19 0 0 1 17 18"/>${head(20, 12, 180)}${head(38, 30, 85)}${blur(34, 13, 0)}`;

const symbols = [
  ["Horizon...", `<path d="M14 21h8v9h15v9H14z" ${red}/><path d="M14 11v9M37 11v18M14 15h23"/>${head(14, 15, 180)}${head(37, 15, 0)}${blur(25, 12, 0)}`],
  ["Vertical", `<path d="M30 12h9v23H21v-8h9z" ${red}/><path d="M16 12h13M16 35h5M18 12v23"/>${head(18, 12, 270)}${head(18, 35, 90)}${blur(14, 24, 90)}`],
  ["Aligned...", slope],
  ["Aligned...", notch],
  ["Aligned...", slope],
  ["Aligned...", notch],
  ["Multi-a...", `<path d="M12 39V33h14v-4h7v-4h7v-6h5v20z" ${green}/><path d="M12 11v28M12 13h32v9M12 18h27v7M12 24h20v6M12 30h13v4"/>`],
  ["Horizon...", `<path d="M17 25h9v7h9v-7h10v14H17z" ${red}/><path d="M10 15h16M26 11v9M35 11v9M35 15h11"/>${blur(14, 15, 0)}${head(26, 15, 0)}${head(35, 15, 180)}`],
  ["Vertical...", `<path d="M24 7h14v29H24V27h6V15h-6z" ${red}/><path d="M14 14h8M14 28h8M17 6v8M17 28v9"/>${head(17, 14, 90)}${head(17, 28, 270)}${head(17, 37, 270)}`],
  ["Arc radi...", `<path d="M7 10h6v15c1 6 4 8 10 8h11v5H7z" ${gray}/><path d="M15 29l15-15h12"/>${head(15, 29, 135)}${blur(37, 13, 0)}`],
  ["Radius ...", circle],
  ["Radius", `<circle cx="17" cy="27" r="9.500" fill="#ededed" stroke="#999"/><path d="M17 27l13-12h8M14 27h6M17 24v6"/>${head(17, 27, 138)}`],
  ["Diameter", circle],
  ["Diamet...", circle + blur(41, 14, 0)],
  ["Angle c...", `<path d="M11 38V19c10 0 19 8 19 19z" ${gray}/><path d="M19 32V10M19 32h22M19 13a20 20 0 0 1 20 19"/>${head(19, 13, 180)}${head(39, 32, 88)}${blur(34, 14, 0)}`],
  ["Angle e...", corner],
  ["Angle u...", corner],
  ["Angle o...", `<path d="M11 31l10-13 10 13z" ${gray}/><path d="M10 31h29M14 28L28 9M36 31v7"/>${head(36, 31, 270)}${blur(18, 10, 0)}${head(26, 12, 30)}`],
  ["Ordinat...", `<path d="M32 17v20" stroke="#aaa" stroke-width="2"/><path d="M21 13h22" stroke="#bba" stroke-dasharray="2 1"/>`],
  ["Ordinat...", `<path d="M24 21h18" stroke="#888"/><path d="M18 7v27" stroke="#aaa" stroke-width="2" stroke-dasharray="1 1"/>`]
];
document.getElementById("symbols").innerHTML = symbols.map(([name, art]) =>
  `<figure><svg class="art" viewBox="0 0 47 46"><use href="#handle" x="3" y="1" width="8" height="8"/>${art}</svg><figcaption>${name}</figcaption></figure>`).join("");
```
